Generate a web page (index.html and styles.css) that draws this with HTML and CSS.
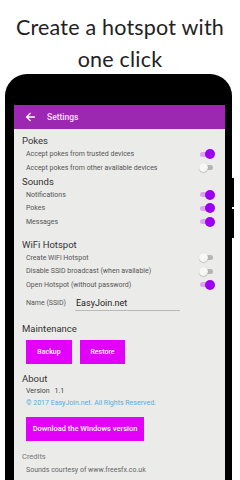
FILE: index.html
```html
<!DOCTYPE html>
<html>
<head>
<meta charset="utf-8">
<link rel="stylesheet" href="styles.css">
</head>
<body>
<h1 class="headline">Create a hotspot with<br>one click</h1>
<div class="phone">
  <span class="side-btn side-btn-1"></span>
  <span class="side-btn side-btn-2"></span>
  <div class="screen">
    <div class="toolbar">
      <svg class="back" width="10" height="10" viewBox="0 0 10 10"><path d="M9.2 5H1.8M5.2 1.4L1.6 5 5.2 8.6" fill="none" stroke="#fff" stroke-width="1.3" stroke-linecap="square"/></svg>
      <span class="toolbar-title">Settings</span>
    </div>
    <div class="content">
      <div class="section">Pokes</div>
      <div class="item"><span>Accept pokes from trusted devices</span><span class="toggle on"></span></div>
      <div class="item"><span>Accept pokes from other available devices</span><span class="toggle"></span></div>
      <div class="section">Sounds</div>
      <div class="item"><span>Notifications</span><span class="toggle on"></span></div>
      <div class="item"><span>Pokes</span><span class="toggle on"></span></div>
      <div class="item"><span>Messages</span><span class="toggle on"></span></div>
      <div class="section gap-wifi">WiFi Hotspot</div>
      <div class="item"><span>Create WiFi Hotspot</span><span class="toggle"></span></div>
      <div class="item"><span>Disable SSID broadcast (when available)</span><span class="toggle"></span></div>
      <div class="item"><span>Open Hotspot (without password)</span><span class="toggle on"></span></div>
      <div class="name-row"><span class="name-label">Name (SSID)</span><span class="name-field">EasyJoin.net</span></div>
      <div class="section gap-maint">Maintenance</div>
      <div class="buttons">
        <span class="btn btn-backup">Backup</span>
        <span class="btn btn-restore">Restore</span>
      </div>
      <div class="section gap-about">About</div>
      <div class="version"><span>Version</span><span class="version-num">1.1</span></div>
      <div class="copyright">© 2017 EasyJoin.net. All Rights Reserved.</div>
      <span class="btn btn-download">Download the Windows version</span>
      <div class="section credits">Credits</div>
      <div class="item plain">Sounds courtesy of www.freesfx.co.uk</div>
    </div>
  </div>
</div>
</body>
</html>
```
FILE: styles.css
```css
html, body {
  margin: 0;
  padding: 0;
}
body {
  width: 240px;
  height: 480px;
  overflow: hidden;
  background: #fff;
  font-family: Roboto, "Liberation Sans", sans-serif;
}
.headline {
  margin: 0;
  padding-top: 11px;
  height: 63px;
  font-family: Lato, "Liberation Sans", sans-serif;
  font-weight: 400;
  font-size: 21.5px;
  line-height: 32px;
  text-align: center;
  color: #222;
  letter-spacing: 0.2px;
  white-space: nowrap;
}
.phone {
  position: relative;
  margin-left: 5px;
  width: 227px;
  height: 406px;
  box-sizing: border-box;
  padding: 31px 7px 0 9px;
  background: #000;
  border-radius: 22px 22px 0 0;
}
.side-btn {
  position: absolute;
  right: -2px;
  width: 3px;
  background: #000;
}
.side-btn-1 { top: 104px; height: 29px; }
.side-btn-2 { top: 135px; height: 29px; }
.screen {
  height: 100%;
  background: #ebebe9;
  overflow: hidden;
}
.toolbar {
  height: 24px;
  background: #9c27b0;
  display: flex;
  align-items: center;
  padding-left: 11px;
}
.back { display: block; }
.toolbar-title {
  margin-left: 12px;
  color: #f4e6f7;
  font-size: 8.5px;
  font-weight: 500;
}
.content {
  padding: 5px 10px 0 8px;
  display: flex;
  flex-direction: column;
}
.section {
  font-size: 9.5px;
  line-height: 13.5px;
  color: #333;
}
.item {
  display: flex;
  align-items: center;
  justify-content: space-between;
  height: 13.5px;
  padding-left: 4px;
  font-size: 7px;
  color: #555;
}
.item.plain { color: #666; }
.gap-wifi { margin-top: 9px; }
.toggle {
  position: relative;
  width: 16px;
  height: 10px;
  flex: none;
}
.toggle::before {
  content: "";
  position: absolute;
  left: 1px;
  top: 2.5px;
  width: 13px;
  height: 5px;
  border-radius: 3px;
  background: #b5b5b3;
}
.toggle::after {
  content: "";
  position: absolute;
  left: 0;
  top: 0.5px;
  width: 9px;
  height: 9px;
  border-radius: 50%;
  background: #f7f7f7;
  box-shadow: 0 0.5px 1px rgba(0,0,0,0.3);
}
.toggle.on::before { background: #dca3f2; }
.toggle.on::after {
  left: 6px;
  top: 0;
  width: 10px;
  height: 10px;
  background: #9d00f0;
  box-shadow: none;
}
.name-row {
  display: flex;
  align-items: center;
  height: 19px;
  margin-top: 2px;
  padding-left: 4px;
}
.name-label {
  font-size: 7px;
  color: #555;
  width: 49px;
}
.name-field {
  width: 104px;
  font-size: 9px;
  line-height: 13px;
  color: #222;
  border-bottom: 1px solid #b9b9b7;
  padding-left: 1px;
  margin-top: 1px;
}
.gap-maint { margin-top: 9.5px; }
.buttons {
  display: flex;
  gap: 8px;
  margin-top: 4.5px;
  padding-left: 4px;
}
.btn {
  display: flex;
  align-items: center;
  justify-content: center;
  height: 24px;
  background: #e300f8;
  color: #fff;
  font-size: 7px;
  font-weight: 500;
}
.btn-backup { width: 46px; }
.btn-restore { width: 45px; }
.gap-about { margin-top: 8px; }
.version {
  display: flex;
  padding-left: 4px;
  font-size: 7px;
  line-height: 10px;
  color: #444;
}
.version-num { margin-left: 5px; }
.copyright {
  margin-top: 1.5px;
  padding-left: 4px;
  font-size: 7px;
  line-height: 13px;
  color: #53aee0;
}
.btn-download {
  align-self: flex-start;
  margin-top: 6.5px;
  margin-left: 4px;
  width: 118px;
  font-size: 7.5px;
}
.credits {
  margin-top: 9.5px;
  font-size: 7.5px;
  line-height: 13px;
  color: #777;
}
```
